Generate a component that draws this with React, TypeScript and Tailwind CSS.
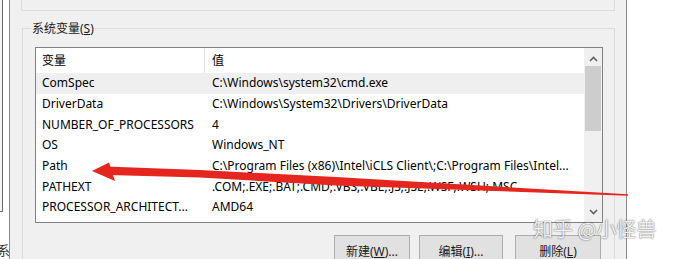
const rows = [
  { name: "ComSpec", value: "C:\\Windows\\system32\\cmd.exe" },
  { name: "DriverData", value: "C:\\Windows\\System32\\Drivers\\DriverData" },
  { name: "NUMBER_OF_PROCESSORS", value: "4" },
  { name: "OS", value: "Windows_NT" },
  { name: "Path", value: "C:\\Program Files (x86)\\Intel\\iCLS Client\\;C:\\Program Files\\Intel..." },
  { name: "PATHEXT", value: ".COM;.EXE;.BAT;.CMD;.VBS;.VBE;.JS;.JSE;.WSF;.WSH;.MSC" },
  { name: "PROCESSOR_ARCHITECT...", value: "AMD64" },
];

function Chevron({ up }: { up?: boolean }) {
  return (
    <svg width="9" height="6" viewBox="0 0 9 6">
      <path
        d={up ? "M1 5 L4.5 1.5 L8 5" : "M1 1 L4.5 4.5 L8 1"}
        fill="none"
        stroke="#606060"
        strokeWidth="1.6"
      />
    </svg>
  );
}

export default function App() {
  return (
    <div className="relative flex h-[259px] w-[676px] overflow-hidden bg-white font-['Noto_Sans','Noto_Sans_CJK_SC',sans-serif] text-[12px] text-black">
      {/* edge of the window behind */}
      <div className="flex w-[9px] flex-col">
        <div className="h-[212px] w-[3px] border-r border-b border-[#6a6a6a] bg-[#f3f3f3]" />
        <div className="mt-[32px] -ml-[3px] overflow-hidden text-[13px] leading-none text-[#333]">系</div>
      </div>

      {/* dialog */}
      <div className="flex h-full w-[618px] flex-col border-x border-[#8a8a8a] bg-[#f0f0f0]">
        {/* bottom of user variables group */}
        <div className="ml-[11px] h-[11px] w-[594px] shrink-0 border-x border-b border-[#dcdcdc]" />

        {/* system variables group */}
        <div className="relative mt-[17px] ml-[12px] w-[593px] flex-1 border border-[#dcdcdc] px-[12px]">
          <div className="absolute -top-[8px] left-[8px] bg-[#f0f0f0] px-[1px] leading-[16px] text-[#1a1a1a]">
            系统变量(<span className="underline">S</span>)
          </div>

          {/* list */}
          <div className="mt-[18px] flex h-[176px] w-[568px] border border-[#828282] bg-white">
            <div className="flex w-[548px] flex-col">
              <div className="flex h-[25px] items-center">
                <div className="w-[168px] pl-[6px]">变量</div>
                <div className="h-full w-px bg-[#e5e5e5]" />
                <div className="pl-[7px]">值</div>
              </div>
              {rows.map((r, i) => (
                <div
                  key={r.name}
                  className={`flex h-[20.7px] items-center whitespace-nowrap ${i === 0 ? "bg-[#efefef]" : ""}`}
                >
                  <div className="w-[169px] overflow-hidden pl-[6px]">{r.name}</div>
                  <div className="flex-1 overflow-hidden pl-[7px]">{r.value}</div>
                </div>
              ))}
            </div>
            {/* scrollbar */}
            <div className="flex w-[18px] flex-col bg-[#f0f0f0]">
              <div className="flex h-[17px] items-center justify-center pt-[4px]">
                <Chevron up />
              </div>
              <div className="mx-[1px] mt-[1px] h-[65px] bg-[#cdcdcd]" />
              <div className="flex-1" />
              <div className="flex h-[17px] items-center justify-center pb-[4px]">
                <Chevron />
              </div>
            </div>
          </div>

          {/* buttons */}
          <div className="mt-[12px] flex">
            <button className="ml-[299px] h-[34px] w-[76px] border border-[#adadad] bg-[#e1e1e1] text-[#1a1a1a]">
              新建(<span className="underline">W</span>)...
            </button>
            <button className="ml-[9px] h-[34px] w-[84px] border border-[#adadad] bg-[#e1e1e1] text-[#1a1a1a]">
              编辑(<span className="underline">I</span>)...
            </button>
            <button className="ml-[12px] h-[34px] w-[86px] border border-[#adadad] bg-[#e1e1e1] text-[#1a1a1a]">
              删除(<span className="underline">L</span>)
            </button>
          </div>
        </div>
      </div>

      {/* red annotation arrow */}
      <svg className="pointer-events-none absolute top-0 left-0" width="676" height="259" viewBox="0 0 676 259">
        <polygon
          fill="#e5261e"
          points="106,166.5 200,170 336,177 628,194.3 628,195.7 336,185.5 200,177.5 108,175"
        />
        <polygon fill="#e5261e" points="92,171 109,162.5 115,181" />
      </svg>

      {/* watermark */}
      <div className="pointer-events-none absolute top-[217px] left-[533px] font-['Noto_Sans_CJK_SC',sans-serif] text-[20px] leading-[24px] text-white/90 [text-shadow:0_0_1px_rgba(0,0,0,0.55),0_0_2px_rgba(0,0,0,0.35)]">
        知乎 @小怪兽
      </div>
    </div>
  );
}
